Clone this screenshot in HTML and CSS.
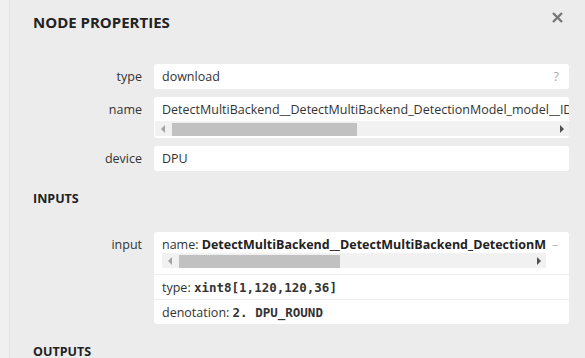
FILE: index.html
```html
<!DOCTYPE html>
<html lang="en">
<head>
<meta charset="UTF-8">
<meta name="viewport" content="width=device-width, initial-scale=1.0">
<title>Node Properties</title>
<link rel="stylesheet" href="styles.css">
</head>
<body>

<div class="sidebar">
  <div class="sidebar-header">
    <div class="sidebar-title">NODE PROPERTIES</div>
    <svg class="sidebar-close" width="11" height="11" viewBox="0 0 11 11">
      <path d="M1 1 L10 10 M10 1 L1 10" stroke="#777" stroke-width="2.4" fill="none"/>
    </svg>
  </div>

  <div class="sidebar-content">
    <div class="item">
      <div class="item-name">type</div>
      <div class="item-value"><span class="item-help">?</span>download</div>
    </div>
    <div class="item">
      <div class="item-name">name</div>
      <div class="item-value item-scroll">
        <div class="scroll-text">DetectMultiBackend__DetectMultiBackend_DetectionModel_model__IDetect_model__105__ModuleList_m__0__Conv2d_m__0__input_fix_download</div>
        <div class="scrollbar">
          <div class="scrollbar-button"><span class="arrow-left"></span></div>
          <div class="scrollbar-track"><div class="scrollbar-thumb" style="width: 185px"></div></div>
          <div class="scrollbar-button"><span class="arrow-right"></span></div>
        </div>
      </div>
    </div>
    <div class="item">
      <div class="item-name">device</div>
      <div class="item-value">DPU</div>
    </div>

    <div class="section">INPUTS</div>

    <div class="item">
      <div class="item-name">input</div>
      <div class="item-value item-argument">
        <div class="argument-line argument-name">
          <div class="argument-scroll">
            <div class="scroll-text">name: <b>DetectMultiBackend__DetectMultiBackend_DetectionModel_model__IDetect_model__105__ModuleList_m__0__Conv2d_m__0__input_fix</b></div>
            <div class="scrollbar">
              <div class="scrollbar-button"><span class="arrow-left"></span></div>
              <div class="scrollbar-track"><div class="scrollbar-thumb" style="width: 161px"></div></div>
              <div class="scrollbar-button"><span class="arrow-right"></span></div>
            </div>
          </div>
          <div class="argument-toggle">&ndash;</div>
        </div>
        <div class="argument-line">type: <code>xint8[1,120,120,36]</code></div>
        <div class="argument-line">denotation: <code>2. DPU_ROUND</code></div>
      </div>
    </div>

    <div class="section">OUTPUTS</div>
  </div>
</div>

</body>
</html>
```

FILE: styles.css
```css
body {
  margin: 0;
  background-color: #f0f0f0;
  font-family: "Open Sans", "DejaVu Sans", sans-serif;
  font-size: 12.5px;
  color: #333;
}
.sidebar {
  margin-left: 9px;
  height: 100vh;
  background-color: #ececec;
  border-left: 1px solid #e3e3e3;
  overflow: hidden;
}
.sidebar-header {
  display: flex;
  justify-content: space-between;
  align-items: flex-start;
  padding: 12px 22px 32px 23px;
}
.sidebar-title {
  font-size: 15px;
  line-height: 20px;
  font-weight: bold;
  color: #222;
}
.sidebar-close {
  display: block;
  cursor: pointer;
}
.sidebar-content {
  padding: 0 16px 0 23px;
}
.item {
  display: flex;
  margin-bottom: 8px;
}
.item-name {
  width: 109px;
  padding-right: 12px;
  text-align: right;
  line-height: 25px;
  flex-shrink: 0;
}
.item-value {
  flex: 1;
  min-width: 0;
  background-color: #fff;
  border-radius: 3px;
  padding: 4px 8px;
  line-height: 17px;
}
.item-help {
  float: right;
  color: #aaa;
  margin-right: 2px;
}
.item-scroll {
  padding: 0 0 2px 1px;
}
.scroll-text {
  overflow: hidden;
  white-space: nowrap;
}
.item-scroll .scroll-text {
  padding: 4px 0 3px 7px;
}

/* classic scrollbar */
.scrollbar {
  display: flex;
  height: 15px;
  background-color: #f1f1f1;
}
.scrollbar-button {
  width: 15px;
  display: flex;
  align-items: center;
  justify-content: center;
  flex-shrink: 0;
}
.arrow-left {
  border-top: 4px solid transparent;
  border-bottom: 4px solid transparent;
  border-right: 4px solid #a3a3a3;
}
.arrow-right {
  border-top: 4px solid transparent;
  border-bottom: 4px solid transparent;
  border-left: 4px solid #505050;
}
.scrollbar-track {
  flex: 1;
  padding: 2px 0 0 2px;
}
.scrollbar-thumb {
  height: 13px;
  background-color: #c1c1c1;
}

.section {
  font-weight: bold;
  line-height: 20px;
  padding: 10px 0 23px;
  color: #222;
}
.item-argument {
  padding: 0;
}
.argument-line {
  padding: 4px 8px 3px;
  border-top: 1px solid #eee;
}
.argument-line:first-child {
  border-top: none;
}
.argument-name {
  display: flex;
  padding: 4px 5px 6px 8px;
}
.argument-scroll {
  flex: 1;
  min-width: 0;
}
.argument-toggle {
  width: 18px;
  text-align: center;
  color: #bbb;
}
code {
  font-family: "DejaVu Sans Mono", monospace;
  font-size: 12.5px;
  font-weight: bold;
}
b {
  color: #222;
}
```
